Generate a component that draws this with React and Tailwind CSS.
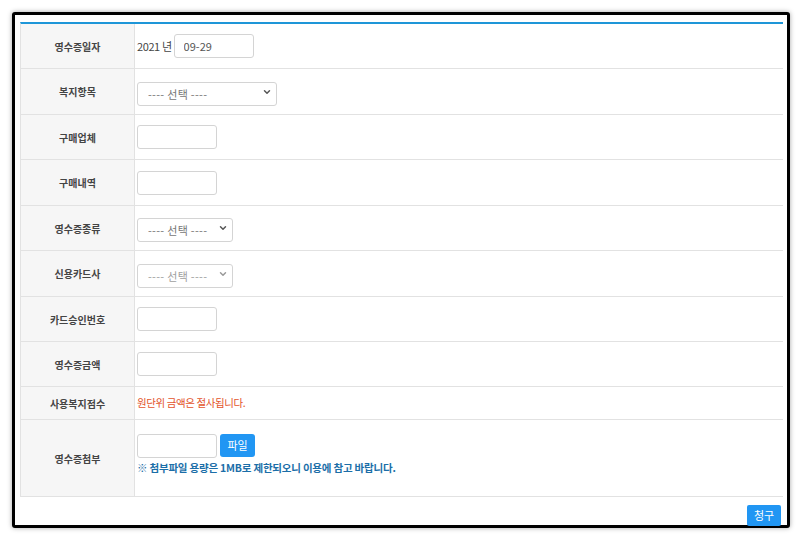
import { ChevronDown } from "lucide-react";

const font = { fontFamily: '"Noto Sans CJK KR", "Noto Sans", sans-serif' };

const TextBox = ({ value = "", className = "w-[80px]" }) => (
    <input
        type="text"
        defaultValue={value}
        className={`h-[24px] ${className} rounded-[3px] border border-[#d4d4d4] bg-white px-[9px] text-[11px] text-[#555] outline-none`}
    />
);

const Choice = ({ width, faded }) => (
    <div className={`relative h-[24px] ${width}`}>
        <select
            className={`h-full w-full appearance-none rounded-[3px] border border-[#d4d4d4] bg-white pl-[10px] text-[11px] tracking-[0.3px] outline-none ${faded ? "text-[#a0a0a0]" : "text-[#777]"}`}
        >
            <option>---- 선택 ----</option>
        </select>
        <ChevronDown
            size={10}
            strokeWidth={3.5}
            className={`pointer-events-none absolute right-[5px] top-[7px] ${faded ? "text-[#999]" : "text-[#555]"}`}
        />
    </div>
);

const Row = ({ label, h, children, last }) => (
    <div className={`grid grid-cols-[114px_1fr] ${h} ${last ? "" : "border-b border-[#e2e2e2]"}`}>
        <div className="flex items-center justify-center border-r border-[#e2e2e2] bg-[#f6f6f6] text-[10px] font-semibold text-[#444]">
            {label}
        </div>
        <div className="flex items-center pl-[2px]">{children}</div>
    </div>
);

export default function App() {
    return (
        <div className="min-h-[539px] w-[800px] bg-white pl-[12px] pt-[12px]" style={font}>
            <div className="flex h-[516px] w-[778px] flex-col rounded-[3px] border-[3px] border-black bg-white pl-[5px] pr-[4px] pt-[7px] shadow-[0_0_5px_rgba(0,0,0,0.35)]">
                <div className="border-l border-b border-t-2 border-[#e2e2e2] border-t-[#1e96d8]">
                    <Row label="영수증일자" h="h-[45px]">
                        <span className="mr-[2px] text-[11px] tracking-[-0.4px] text-[#444]">2021 년</span>
                        <TextBox value="09-29" />
                    </Row>
                    <Row label="복지항목" h="h-[46px]">
                        <Choice width="w-[140px]" />
                    </Row>
                    <Row label="구매업체" h="h-[45px]">
                        <TextBox />
                    </Row>
                    <Row label="구매내역" h="h-[46px]">
                        <TextBox />
                    </Row>
                    <Row label="영수증종류" h="h-[45px]">
                        <Choice width="w-[96px]" />
                    </Row>
                    <Row label="신용카드사" h="h-[46px]">
                        <Choice width="w-[96px]" faded />
                    </Row>
                    <Row label="카드승인번호" h="h-[45px]">
                        <TextBox />
                    </Row>
                    <Row label="영수증금액" h="h-[45px]">
                        <TextBox />
                    </Row>
                    <Row label="사용복지점수" h="h-[33px]">
                        <span className="text-[10.5px] tracking-[-0.4px] text-[#e3542b]">원단위 금액은 절사됩니다.</span>
                    </Row>
                    <Row label="영수증첨부" h="h-[76px]" last>
                        <div className="flex flex-col gap-[3px] pb-[8px]">
                            <div className="flex items-center gap-[3px]">
                                <TextBox />
                                <button className="h-[23px] w-[35px] rounded-[3px] bg-[#2196f3] text-[11px] text-white">
                                    파일
                                </button>
                            </div>
                            <span className="text-[10.5px] font-bold leading-[14px] tracking-[-0.2px] text-[#1b6ea8]">
                                ※ 첨부파일 용량은 1MB로 제한되오니 이용에 참고 바랍니다.
                            </span>
                        </div>
                    </Row>
                </div>
                <div className="flex justify-end pr-[2px] pt-[8px]">
                    <button className="h-[21px] w-[34px] rounded-[2px] bg-[#2196f3] text-[11px] text-white">청구</button>
                </div>
            </div>
        </div>
    );
}
